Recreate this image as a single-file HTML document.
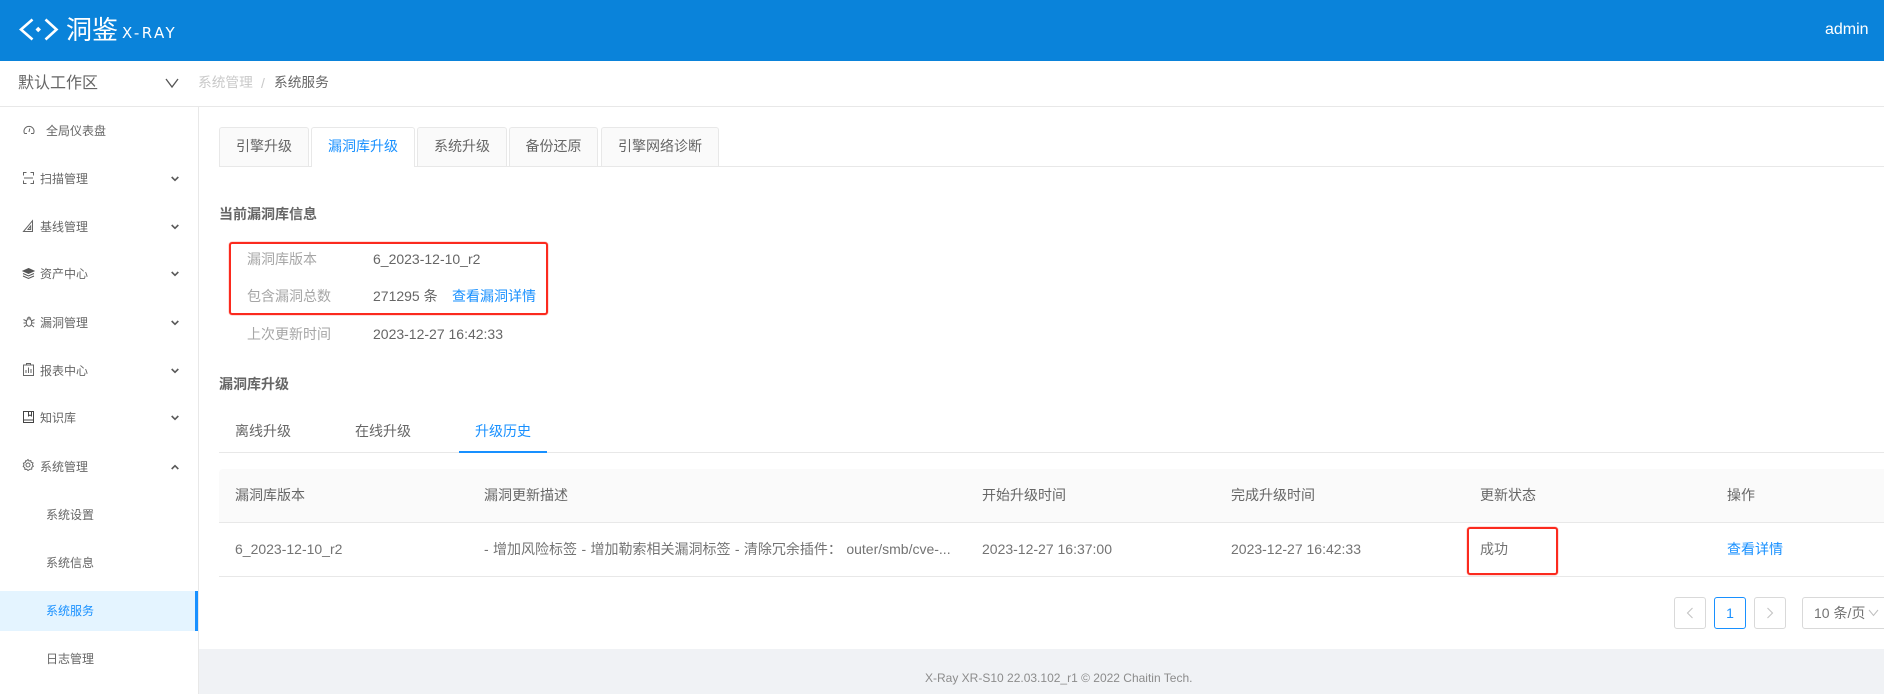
<!DOCTYPE html>
<html lang="zh-CN"><head><meta charset="utf-8"><title>洞鉴 X-RAY</title>
<style>
*{box-sizing:border-box}
html,body{margin:0;padding:0;width:1884px;height:694px;overflow:hidden;background:#fff}
body{position:relative;font-family:"Liberation Sans","Noto Sans CJK SC",sans-serif;font-size:14px;color:#666}
.t{position:absolute;white-space:nowrap;height:20px;line-height:20px}
.b{position:absolute}
.s{font-size:12px;color:#666}
.h{font-weight:700;color:#666}
.l{color:#a6a6a6}
.v{color:#666}
.a{color:#1890ff}
.tab{position:absolute;top:127px;height:39px;background:#fafafa;border:1px solid #e8e8e8;border-bottom:0;border-radius:3px 3px 0 0;text-align:center;line-height:37px;color:#666}
.pg{position:absolute;top:597px;width:32px;height:32px;border:1px solid #d9d9d9;border-radius:3px;background:#fff;text-align:center;line-height:30px}
svg{position:absolute;overflow:visible}
.ic{fill:none;stroke:#666;stroke-width:1}
.ch{fill:none;stroke:#595959;stroke-width:1.6}
.red{position:absolute;border:2px solid #fb2a1e;border-radius:3px;box-shadow:0 0 1px #fb2a1e}
</style></head><body>

<div class="b" style="left:0;top:0;width:1884px;height:61px;background:#0a83da"></div>
<svg style="left:19px;top:18px" width="40" height="24" viewBox="0 0 40 24"><path d="M13.500 1.500 2 11.500 13.500 21.500M26.500 1.500 37.500 11.500 26.500 21.500" fill="none" stroke="#fff" stroke-width="2.600"/><path d="M19.200 8.800 22 11.500 19.200 14.200 16.500 11.500Z" fill="#fff"/></svg>
<div class="t" style="left:66px;top:13px;height:32px;line-height:32px;font-size:26px;font-weight:400;color:#fff;font-family:'Noto Sans CJK SC',sans-serif">洞鉴</div>
<div class="t" style="left:122px;top:23px;font-size:15px;letter-spacing:2.400px;color:#fff;font-family:'DejaVu Sans',sans-serif;line-height:20px">X-RAY</div>
<div class="t" style="left:1825px;top:20px;font-size:16px;color:#fff">admin</div>

<div class="b" style="left:0;top:106px;width:1884px;height:1px;background:#e8e8e8"></div>
<div class="t" style="left:18px;top:74px;font-size:16px;color:#666">默认工作区</div>
<svg style="left:165px;top:77px" width="14" height="12" viewBox="0 0 14 12"><path d="M1 2 7 10 13 2" fill="none" stroke="#555" stroke-width="1.300"/></svg>
<div class="t" style="left:198px;top:73px;color:#c9c9c9;font-size:13.700px">系统管理</div>
<div class="t" style="left:261px;top:73px;color:#c9c9c9">/</div>
<div class="t" style="left:274px;top:73px;color:#666;font-size:13.700px">系统服务</div>

<div class="b" style="left:198px;top:107px;width:1px;height:587px;background:#e8e8e8"></div>
<div class="b" style="left:199px;top:649px;width:1685px;height:45px;background:#f0f2f5"></div>
<div class="b" style="left:199px;top:107px;width:1685px;height:542px;background:#fff;border-radius:0 0 0 6px"></div>

<!-- sidebar -->
<svg class="ic" style="left:23px;top:125px" width="12" height="10" viewBox="0 0 12 10"><path d="M1.500 8.500A5 5 0 1 1 10.500 8.500M1.500 8.500H4M8 8.500h2.500M6 7 6.800 3.500"/></svg>
<div class="t s" style="left:46px;top:121px">全局仪表盘</div>
<svg class="ic" style="left:23px;top:172px" width="11" height="12" viewBox="0 0 11 12"><path d="M.5 3.500V.5h3M7.500.5h3v3M.5 8.500v3h3M7.500 11.500h3v-3M1 6h9"/></svg>
<div class="t s" style="left:40px;top:169px">扫描管理</div>
<svg class="ic" style="left:23px;top:220px" width="11" height="12" viewBox="0 0 11 12"><path d="M.5 11.500 9.500.7v10.800ZM5 9.500h2.700V6Z"/></svg>
<div class="t s" style="left:40px;top:217px">基线管理</div>
<svg class="ic" style="left:22px;top:268px;stroke:#555" width="13" height="12" viewBox="0 0 13 12"><path d="M6.500.5 12 3 6.500 5.500 1 3Z" fill="#555"/><path d="M1 5.500 6.500 8 12 5.500M1 8 6.500 10.500 12 8"/></svg>
<div class="t s" style="left:40px;top:264px">资产中心</div>
<svg class="ic" style="left:23px;top:316px" width="12" height="12" viewBox="0 0 12 12"><ellipse cx="6" cy="6.500" rx="2.700" ry="3.800"/><path d="M4 2.500 6 1l2 1.500M.5 3.500l3 1.500M11.500 3.500l-3 1.500M.5 7h3M8.500 7h3M1 11l2.500-2M11 11 8.500 9"/></svg>
<div class="t s" style="left:40px;top:313px">漏洞管理</div>
<svg class="ic" style="left:23px;top:363px" width="11" height="13" viewBox="0 0 11 13"><path d="M.5 2h10v10.500H.5ZM3.500 2V.5h4V2M3 10V7M5.500 10V4.500M8 10V6"/></svg>
<div class="t s" style="left:40px;top:361px">报表中心</div>
<svg class="ic" style="left:23px;top:411px;stroke:#444" width="11" height="12" viewBox="0 0 11 12"><path d="M.5.500h10v11H.5ZM.5 9h10M5.500.5v4.500l1.500-1 1.500 1V.5"/></svg>
<div class="t s" style="left:40px;top:408px">知识库</div>
<svg class="ic" style="left:22px;top:459px" width="12" height="12" viewBox="0 0 12 12"><path d="M6 .5l1 1.500 1.800-.4.400 1.800 1.800.6-.6 1.800.9 1.500-1.500 1-.1 1.800-1.800.1L6 11.500 4.700 10.200l-1.800.1-.2-1.800-1.500-1 .8-1.500-.6-1.800 1.800-.6.400-1.800L4.400 2Z"/><circle cx="6" cy="6" r="2"/></svg>
<div class="t s" style="left:40px;top:457px">系统管理</div>
<svg class="ch" style="left:171px;top:176px" width="8" height="6" viewBox="0 0 8 6"><path d="M.7 1 4 4.300 7.300 1"/></svg>
<svg class="ch" style="left:171px;top:224px" width="8" height="6" viewBox="0 0 8 6"><path d="M.7 1 4 4.300 7.300 1"/></svg>
<svg class="ch" style="left:171px;top:271px" width="8" height="6" viewBox="0 0 8 6"><path d="M.7 1 4 4.300 7.300 1"/></svg>
<svg class="ch" style="left:171px;top:320px" width="8" height="6" viewBox="0 0 8 6"><path d="M.7 1 4 4.300 7.300 1"/></svg>
<svg class="ch" style="left:171px;top:368px" width="8" height="6" viewBox="0 0 8 6"><path d="M.7 1 4 4.300 7.300 1"/></svg>
<svg class="ch" style="left:171px;top:415px" width="8" height="6" viewBox="0 0 8 6"><path d="M.7 1 4 4.300 7.300 1"/></svg>
<svg class="ch" style="left:171px;top:464px" width="8" height="6" viewBox="0 0 8 6"><path d="M.7 5 4 1.700 7.300 5"/></svg>
<div class="t s" style="left:46px;top:505px">系统设置</div>
<div class="t s" style="left:46px;top:553px">系统信息</div>
<div class="b" style="left:0;top:591px;width:198px;height:40px;background:#e4f4ff"></div>
<div class="b" style="left:195px;top:591px;width:3px;height:40px;background:#1890ff"></div>
<div class="t s" style="left:46px;top:601px;color:#1890ff">系统服务</div>
<div class="t s" style="left:46px;top:649px">日志管理</div>

<!-- top tabs -->
<div class="b" style="left:219px;top:166px;width:1665px;height:1px;background:#e8e8e8"></div>
<div class="tab" style="left:219px;width:90px">引擎升级</div>
<div class="tab" style="left:311px;width:104px;height:40px;background:#fff;color:#1890ff">漏洞库升级</div>
<div class="tab" style="left:417px;width:90px">系统升级</div>
<div class="tab" style="left:509px;width:89px">备份还原</div>
<div class="tab" style="left:601px;width:118px">引擎网络诊断</div>

<!-- info -->
<div class="t h" style="left:219px;top:204px">当前漏洞库信息</div>
<div class="t l" style="left:247px;top:249px">漏洞库版本</div>
<div class="t v" style="left:373px;top:249px">6_2023-12-10_r2</div>
<div class="t l" style="left:247px;top:286px">包含漏洞总数</div>
<div class="t v" style="left:373px;top:286px">271295 条</div>
<div class="t a" style="left:452px;top:286px">查看漏洞详情</div>
<div class="t l" style="left:247px;top:324px">上次更新时间</div>
<div class="t v" style="left:373px;top:324px">2023-12-27 16:42:33</div>
<div class="red" style="left:229px;top:242px;width:319px;height:73px"></div>

<!-- upgrade -->
<div class="t h" style="left:219px;top:374px">漏洞库升级</div>
<div class="t v" style="left:235px;top:421px">离线升级</div>
<div class="t v" style="left:355px;top:421px">在线升级</div>
<div class="t a" style="left:475px;top:421px">升级历史</div>
<div class="b" style="left:219px;top:452px;width:1665px;height:1px;background:#e8e8e8"></div>
<div class="b" style="left:459px;top:451px;width:88px;height:2px;background:#1890ff"></div>

<!-- table -->
<div class="b" style="left:219px;top:469px;width:1665px;height:54px;background:#fafafa;border-bottom:1px solid #e8e8e8;border-radius:4px 0 0 0"></div>
<div class="b" style="left:219px;top:576px;width:1665px;height:1px;background:#e8e8e8"></div>
<div class="t v" style="left:235px;top:485px">漏洞库版本</div>
<div class="t v" style="left:484px;top:485px">漏洞更新描述</div>
<div class="t v" style="left:982px;top:485px">开始升级时间</div>
<div class="t v" style="left:1231px;top:485px">完成升级时间</div>
<div class="t v" style="left:1480px;top:485px">更新状态</div>
<div class="t v" style="left:1727px;top:485px">操作</div>
<div class="t" style="left:235px;top:539px;color:#737373">6_2023-12-10_r2</div>
<div class="t" style="left:484px;top:539px;color:#737373;width:470px;overflow:hidden;word-spacing:.5px">- 增加风险标签 - 增加勒索相关漏洞标签 - 清除冗余插件： outer/smb/cve-...</div>
<div class="t" style="left:982px;top:539px;color:#737373">2023-12-27 16:37:00</div>
<div class="t" style="left:1231px;top:539px;color:#737373">2023-12-27 16:42:33</div>
<div class="t" style="left:1480px;top:539px;color:#737373">成功</div>
<div class="t a" style="left:1727px;top:539px">查看详情</div>
<div class="red" style="left:1467px;top:527px;width:91px;height:48px"></div>

<!-- pagination -->
<div class="pg" style="left:1674px"><svg style="left:11px;top:9px" width="8" height="12" viewBox="0 0 8 12"><path d="M6.500 1 1.500 6 6.500 11" fill="none" stroke="#c4c4c4" stroke-width="1.100"/></svg></div>
<div class="pg" style="left:1714px;border-color:#1890ff;color:#1890ff">1</div>
<div class="pg" style="left:1754px"><svg style="left:11px;top:9px" width="8" height="12" viewBox="0 0 8 12"><path d="M1.500 1 6.500 6 1.500 11" fill="none" stroke="#c4c4c4" stroke-width="1.100"/></svg></div>
<div class="b" style="left:1802px;top:597px;width:90px;height:32px;border:1px solid #d9d9d9;border-radius:3px;background:#fff"></div>
<div class="t" style="left:1814px;top:603px;color:#737373">10 条/页</div>
<svg style="left:1868px;top:609px" width="11" height="8" viewBox="0 0 11 8"><path d="M1 1 5.500 6.500 10 1" fill="none" stroke="#bfbfbf" stroke-width="1"/></svg>

<div class="t" style="left:925px;top:668px;font-size:12px;color:#8c8c8c">X-Ray XR-S10 22.03.102_r1 © 2022 Chaitin Tech.</div>
</body></html>
